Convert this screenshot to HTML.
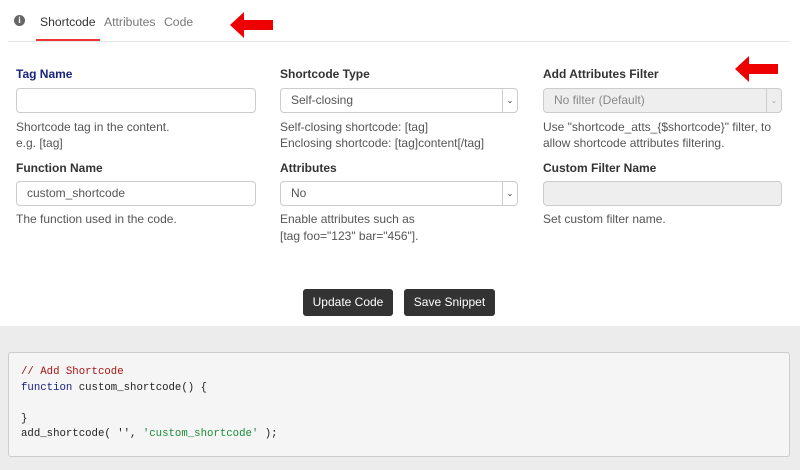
<!DOCTYPE html>
<html><head><style>
body{margin:0;width:800px;height:470px;background:#fff;font-family:"Liberation Sans",Arial,sans-serif;font-size:12px;color:#555;position:relative;overflow:hidden}
.a{position:absolute}
.lbl{font-weight:bold;color:#333;font-size:12px}
.inp{position:absolute;border:1px solid #ccc;border-radius:4px;background:#fff;box-sizing:border-box;height:25px;font-size:12px;color:#555;line-height:23px;padding-left:10px}
.dis{background:#eee;color:#888}
.sel{position:absolute;right:0;top:0;width:14px;height:23px;border-left:1px solid #ccc;font-size:8px;text-align:center;line-height:23px;color:#333}
.help{position:absolute;font-size:12px;color:#555;line-height:16px}
.btn{position:absolute;background:#333;color:#fff;border-radius:3px;height:27px;line-height:27px;text-align:center;font-size:12px;top:289px}
pre{font-family:"Liberation Mono",monospace;font-size:10.7px;line-height:15.5px}
</style></head><body>
<div class="a" style="left:14px;top:15px;width:11px;height:11px;border-radius:50%;background:#666;color:#fff;font-size:9px;font-weight:bold;text-align:center;line-height:11px;font-family:'Liberation Serif',serif">i</div>
<div class="a" style="left:40px;top:15px;font-size:12.2px;color:#333">Shortcode</div>
<div class="a" style="left:104px;top:15px;font-size:12.2px;color:#777">Attributes</div>
<div class="a" style="left:164px;top:15px;font-size:12.2px;color:#777">Code</div>
<div class="a" style="left:36px;top:39px;width:64px;height:3px;background:#e33"></div>
<div class="a" style="left:8px;top:41px;width:782px;height:1px;background:#e6e6e6"></div>
<svg class="a" style="left:230px;top:12px" width="44" height="26"><polygon points="0,13 14,0 14,8 43,8 43,18 14,18 14,26" fill="#e00"/></svg>
<svg class="a" style="left:735px;top:56px" width="44" height="26"><polygon points="0,13 14,0 14,8 43,8 43,18 14,18 14,26" fill="#e00"/></svg>
<svg class="a" style="left:703px;top:367px" width="44" height="26"><polygon points="0,13 14,0 14,8 43,8 43,18 14,18 14,26" fill="#e00"/></svg>

<div class="a lbl" style="left:16px;top:67px;color:#1a237e">Tag Name</div>
<div class="inp" style="left:16px;top:88px;width:240px"></div>
<div class="help" style="left:16px;top:119px">Shortcode tag in the content.<br>e.g. [tag]</div>

<div class="a lbl" style="left:280px;top:67px">Shortcode Type</div>
<div class="inp" style="left:280px;top:88px;width:238px">Self-closing<span class="sel">&#8964;</span></div>
<div class="help" style="left:280px;top:119px">Self-closing shortcode: [tag]<br>Enclosing shortcode: [tag]content[/tag]</div>

<div class="a lbl" style="left:543px;top:67px">Add Attributes Filter</div>
<div class="inp dis" style="left:543px;top:88px;width:239px">No filter (Default)<span class="sel" style="color:#aaa">&#8964;</span></div>
<div class="help" style="left:543px;top:119px">Use "shortcode_atts_{$shortcode}" filter, to<br>allow shortcode attributes filtering.</div>

<div class="a lbl" style="left:16px;top:161px">Function Name</div>
<div class="inp" style="left:16px;top:181px;width:240px">custom_shortcode</div>
<div class="help" style="left:16px;top:211px">The function used in the code.</div>

<div class="a lbl" style="left:280px;top:161px">Attributes</div>
<div class="inp" style="left:280px;top:181px;width:238px">No<span class="sel">&#8964;</span></div>
<div class="help" style="left:280px;top:211px;line-height:17px">Enable attributes such as<br>[tag foo="123" bar="456"].</div>

<div class="a lbl" style="left:543px;top:161px">Custom Filter Name</div>
<div class="inp dis" style="left:543px;top:181px;width:239px"></div>
<div class="help" style="left:543px;top:211px">Set custom filter name.</div>

<div class="btn" style="left:303px;width:90px">Update Code</div>
<div class="btn" style="left:404px;width:91px">Save Snippet</div>

<div class="a" style="left:0;top:326px;width:800px;height:144px;background:#ececec"></div>
<div class="a" style="left:8px;top:352px;width:780px;height:103px;background:#f5f5f5;border:1px solid #ccc;border-radius:3px"></div>
<pre class="a" style="left:21px;top:365px;margin:0;color:#222"><span style="color:#a31515">// Add Shortcode</span>
<span style="color:#1a237e">function</span> custom_shortcode() {

}
add_shortcode( '', <span style="color:#1a8a3a">'custom_shortcode'</span> );</pre>
</body></html>
